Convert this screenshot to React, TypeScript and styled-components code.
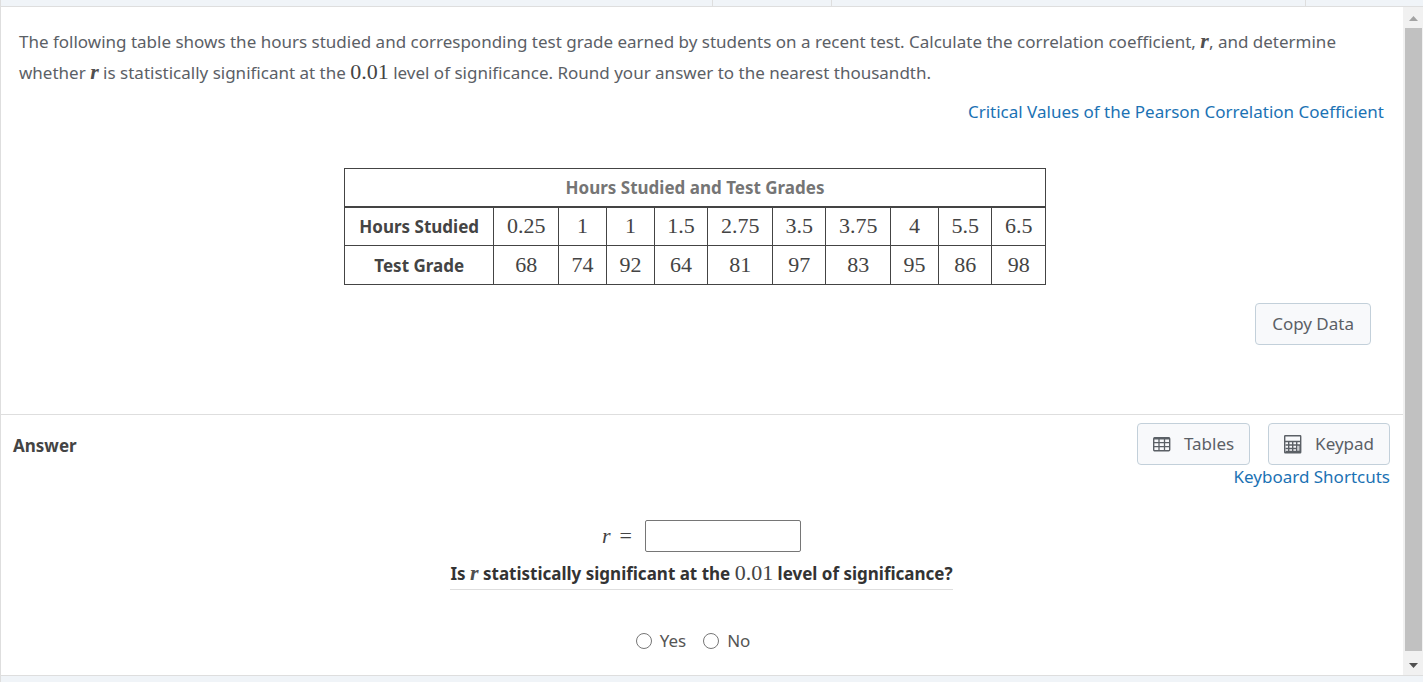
import React from "react";
import styled, { createGlobalStyle } from "styled-components";

const GlobalStyle = createGlobalStyle`
  * { box-sizing: border-box; }
  body {
    margin: 0;
    background: #ffffff;
    color: #5b6066;
    font-family: "Noto Sans", "Open Sans", sans-serif;
    font-size: 17px;
    line-height: 24px;
  }
`;

const Page = styled.div`
  display: flex;
  flex-direction: column;
  min-height: 100vh;
  border-left: 1px solid #dedede;
`;

const TopStrip = styled.div`
  display: grid;
  grid-template-columns: 712fr 119fr 474fr 117fr;
  height: 7px;
  background: #f0f4f8;
  border-bottom: 1px solid #dedede;
`;

const StripCell = styled.div`
  border-right: 1px solid #dedede;
  &:last-child { border-right: 0; }
`;

const BottomStrip = styled.div`
  height: 7px;
  background: #f0f4f8;
  border-top: 1px solid #dedede;
`;

const Body = styled.div`
  display: flex;
  flex: 1;
`;

const Content = styled.main`
  flex: 1;
  min-width: 0;
`;

const ScrollTrack = styled.div`
  display: flex;
  flex-direction: column;
  align-items: center;
  width: 20px;
  padding: 0 1px 0 2px;
  background: #f1f1f1;
`;

const ScrollArrow = styled.svg`
  display: block;
  width: 17px;
  height: 21px;
`;

const ScrollThumb = styled.div`
  flex: 1;
  width: 17px;
  margin-bottom: 3px;
  background: #c1c1c1;
`;

const Question = styled.section`
  padding: 19px 19px 69px 18px;
  border-bottom: 1px solid #dedede;
`;

const Prompt = styled.p`
  margin: 0;
  line-height: 31px;
`;

const Variable = styled.i<{ $bold?: boolean }>`
  color: ${(p) => (p.$bold ? "#505050" : "#444444")};
  font-family: "Liberation Serif", serif;
  font-size: 22px;
  font-weight: ${(p) => (p.$bold ? 700 : 400)};
  line-height: 1;
`;

const NumberText = styled.span`
  color: #444444;
  font-family: "Liberation Serif", serif;
  font-size: 22px;
  font-weight: 400;
  line-height: 1;
`;

const Link = styled.a`
  color: #1b72b4;
  text-decoration: none;
`;

const LinkRow = styled.div`
  display: flex;
  justify-content: flex-end;
  margin-top: 12px;
`;

const DataArea = styled.div`
  display: flex;
  flex-direction: column;
  align-items: center;
  margin: 44px 13px 0 0;
`;

const DataTable = styled.table`
  border-collapse: collapse;
  min-width: 702px;
  color: #444444;
  text-align: center;
`;

const TitleCell = styled.th`
  height: 38px;
  padding: 1px 12px 0;
  border: 1px solid #444444;
  border-bottom-width: 2px;
  color: #757575;
`;

const HeadCell = styled.th`
  height: 39px;
  padding: 1px 13px 0;
  border: 1px solid #444444;
`;

const DataCell = styled.td`
  height: 39px;
  padding: 1px 12px 0;
  border: 1px solid #444444;
`;

const Button = styled.button`
  display: inline-flex;
  align-items: center;
  gap: 12px;
  height: 42px;
  padding: 0 15px;
  border: 1px solid #c3d0da;
  border-radius: 4px;
  background: #f8f9fb;
  color: #5b6066;
  font: inherit;
`;

const CopyButton = styled(Button)`
  align-self: flex-end;
  margin-top: 18px;
  padding: 0 16px;
`;

const ButtonIcon = styled.svg`
  display: block;
  width: 19px;
  height: 20px;
`;

const AnswerSection = styled.section`
  padding: 8px 13px 20px 12px;
`;

const AnswerBar = styled.div`
  display: flex;
  align-items: center;
  justify-content: space-between;
`;

const AnswerTitle = styled.h2`
  margin: 0;
  padding-top: 3px;
  color: #444444;
  font-size: 17px;
  line-height: 24px;
`;

const Tools = styled.div`
  display: flex;
  gap: 18px;
`;

const ShortcutRow = styled.div`
  display: flex;
  justify-content: flex-end;
`;

const AnswerForm = styled.form`
  display: flex;
  flex-direction: column;
  align-items: center;
  margin-top: 31px;
`;

const Field = styled.label`
  display: flex;
  align-items: center;
  gap: 13px;
`;

const Equation = styled.span`
  display: flex;
  align-items: center;
  gap: 9px;
`;

const FieldInput = styled.input`
  width: 156px;
  height: 32px;
  padding: 0 8px;
  border: 1px solid #767676;
  border-radius: 2px;
  background: #ffffff;
  font: inherit;
`;

const Choices = styled.fieldset`
  display: flex;
  flex-direction: column;
  align-items: center;
  min-width: 0;
  margin: 7px 0 0;
  padding: 0;
  border: 0;
`;

const ChoiceTitle = styled.legend`
  padding: 0;
  border-bottom: 1px solid #dedede;
  color: #333333;
  font-weight: 700;
  line-height: 30px;
`;

const ChoiceList = styled.div`
  display: flex;
  margin-top: 39px;
`;

const Choice = styled.label`
  display: flex;
  align-items: center;
  gap: 8px;
  margin-right: 17px;
  color: #555555;
`;

const Radio = styled.input`
  width: 16px;
  height: 16px;
  margin: 0;
`;

const observations = [
  { hours: "0.25", grade: "68" },
  { hours: "1", grade: "74" },
  { hours: "1", grade: "92" },
  { hours: "1.5", grade: "64" },
  { hours: "2.75", grade: "81" },
  { hours: "3.5", grade: "97" },
  { hours: "3.75", grade: "83" },
  { hours: "4", grade: "95" },
  { hours: "5.5", grade: "86" },
  { hours: "6.5", grade: "98" },
];

function TableIcon() {
  return (
    <ButtonIcon viewBox="0 0 19 20" fill="none" stroke="#5b6066" aria-hidden="true">
      <rect x="0.7" y="3.7" width="16" height="13" rx="1" strokeWidth="1.4" />
      <path d="M1 4.500h15.500" strokeWidth="2" />
      <path d="M1 8.700h15.500M1 12.600h15.500M6 4v12.500M11.500 4v12.500" strokeWidth="1.3" />
    </ButtonIcon>
  );
}

function KeypadIcon() {
  return (
    <ButtonIcon viewBox="0 0 19 20" fill="none" stroke="#5b6066" aria-hidden="true">
      <rect x="0.7" y="1.700" width="16" height="17" rx="0.500" strokeWidth="1.400" />
      <path d="M1 7.500h15.500" strokeWidth="1.500" />
      <path d="M1.500 11h15M1.500 14.500h11M1.500 17.500h15" strokeWidth="1.300" />
      <path d="M4.700 7.500v10.500M8.700 7.500v10.500M12.700 7.500v10.500" strokeWidth="1.400" />
      <path d="M15.200 11v7" strokeWidth="1" />
    </ButtonIcon>
  );
}

export default function App() {
  return (
    <>
      <GlobalStyle />
      <Page>
        <TopStrip>
          <StripCell />
          <StripCell />
          <StripCell />
          <StripCell />
        </TopStrip>
        <Body>
          <Content>
            <Question>
              <Prompt>
                The following table shows the hours studied and corresponding test grade earned by
                students on a recent test. Calculate the correlation coefficient,{" "}
                <Variable $bold>r</Variable>, and determine whether <Variable $bold>r</Variable> is
                statistically significant at the <NumberText>0.01</NumberText> level of significance.
                Round your answer to the nearest thousandth.
              </Prompt>
              <LinkRow>
                <Link href="#critical-values">
                  Critical Values of the Pearson Correlation Coefficient
                </Link>
              </LinkRow>
              <DataArea>
                <DataTable>
                  <thead>
                    <tr>
                      <TitleCell colSpan={observations.length + 1}>
                        Hours Studied and Test Grades
                      </TitleCell>
                    </tr>
                  </thead>
                  <tbody>
                    <tr>
                      <HeadCell scope="row">Hours Studied</HeadCell>
                      {observations.map((item, i) => (
                        <DataCell key={i}>
                          <NumberText>{item.hours}</NumberText>
                        </DataCell>
                      ))}
                    </tr>
                    <tr>
                      <HeadCell scope="row">Test Grade</HeadCell>
                      {observations.map((item, i) => (
                        <DataCell key={i}>
                          <NumberText>{item.grade}</NumberText>
                        </DataCell>
                      ))}
                    </tr>
                  </tbody>
                </DataTable>
                <CopyButton type="button">Copy Data</CopyButton>
              </DataArea>
            </Question>
            <AnswerSection>
              <AnswerBar>
                <AnswerTitle>Answer</AnswerTitle>
                <Tools>
                  <Button type="button">
                    <TableIcon />
                    Tables
                  </Button>
                  <Button type="button">
                    <KeypadIcon />
                    Keypad
                  </Button>
                </Tools>
              </AnswerBar>
              <ShortcutRow>
                <Link href="#shortcuts">Keyboard Shortcuts</Link>
              </ShortcutRow>
              <AnswerForm>
                <Field>
                  <Equation>
                    <Variable>r</Variable>
                    <NumberText>=</NumberText>
                  </Equation>
                  <FieldInput type="text" name="r" />
                </Field>
                <Choices>
                  <ChoiceTitle>
                    Is <Variable $bold>r</Variable> statistically significant at the{" "}
                    <NumberText>0.01</NumberText> level of significance?
                  </ChoiceTitle>
                  <ChoiceList>
                    <Choice>
                      <Radio type="radio" name="significant" value="yes" />
                      Yes
                    </Choice>
                    <Choice>
                      <Radio type="radio" name="significant" value="no" />
                      No
                    </Choice>
                  </ChoiceList>
                </Choices>
              </AnswerForm>
            </AnswerSection>
          </Content>
          <ScrollTrack aria-hidden="true">
            <ScrollArrow viewBox="0 0 17 21">
              <path d="M4 14L8.500 9L13 14Z" fill="#a3a3a3" />
            </ScrollArrow>
            <ScrollThumb />
            <ScrollArrow viewBox="0 0 17 21">
              <path d="M4 9L8.500 14L13 9Z" fill="#505050" />
            </ScrollArrow>
          </ScrollTrack>
        </Body>
        <BottomStrip />
      </Page>
    </>
  );
}
